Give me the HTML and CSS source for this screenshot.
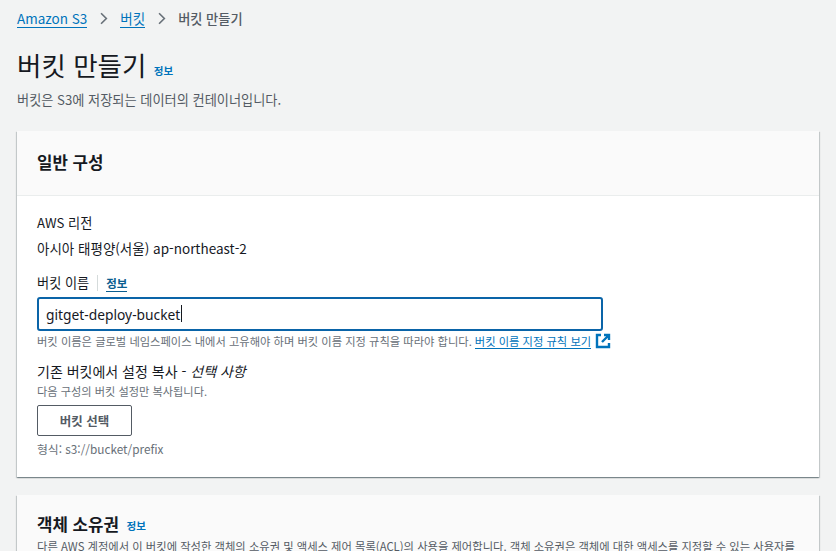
FILE: index.html
```html
<!DOCTYPE html>
<html lang="ko">
<head>
  <meta charset="UTF-8" />
  <title>버킷 만들기</title>
  <link rel="stylesheet" href="styles.css">
</head>
<body>
  <nav class="breadcrumb">
    <a href="#">Amazon S3</a>
    <svg class="chevron" viewBox="0 0 16 16"><path d="M5 1.5 11.5 8 5 14.5"/></svg>
    <a href="#">버킷</a>
    <svg class="chevron" viewBox="0 0 16 16"><path d="M5 1.5 11.5 8 5 14.5"/></svg>
    <span>버킷 만들기</span>
  </nav>

  <header class="page-header">
    <h1>버킷 만들기 <a class="info" href="#">정보</a></h1>
    <p>버킷은 S3에 저장되는 데이터의 컨테이너입니다.</p>
  </header>

  <section class="card">
    <div class="card-head">
      <h2>일반 구성</h2>
    </div>
    <div class="card-body">
      <div class="label">AWS 리전</div>
      <div class="region">아시아 태평양(서울) ap-northeast-2</div>

      <div class="label name-label">
        버킷 이름
        <span class="divider"></span>
        <a class="info-link" href="#">정보</a>
      </div>
      <div class="input-wrap">
        <input class="name-input" type="text" value="gitget-deploy-bucket" />
        <span class="caret"></span>
      </div>
      <div class="hint">
        버킷 이름은 글로벌 네임스페이스 내에서 고유해야 하며 버킷 이름 지정 규칙을 따라야 합니다.
        <a href="#">버킷 이름 지정 규칙 보기</a>
        <svg class="external" viewBox="0 0 16 16"><path d="M9 2H14V7M14 2 7 9M6 2H2V14H14V10"/></svg>
      </div>

      <div class="label copy-label">기존 버킷에서 설정 복사 - <i>선택 사항</i></div>
      <div class="small copy-note">다음 구성의 버킷 설정만 복사됩니다.</div>
      <button class="btn" type="button">버킷 선택</button>
      <div class="small format">형식: s3://bucket/prefix</div>
    </div>
  </section>

  <section class="card second">
    <div class="card-head">
      <h2>객체 소유권 <a class="info" href="#">정보</a></h2>
      <p>다른 AWS 계정에서 이 버킷에 작성한 객체의 소유권 및 액세스 제어 목록(ACL)의 사용을 제어합니다. 객체 소유권은 객체에 대한 액세스를 지정할 수 있는 사용자를</p>
    </div>
  </section>
</body>
</html>
```

FILE: styles.css
```css
html, body {
  height: 551px;
  overflow: hidden;
}
body {
  margin: 0;
  padding: 0 17px 0 17px;
  background: #f2f3f3;
  color: #16191f;
  font-family: "Noto Sans CJK KR", "Noto Sans", sans-serif;
  font-size: 14px;
}
a {
  color: #0073bb;
  text-decoration: none;
}
.breadcrumb {
  display: flex;
  align-items: center;
  gap: 10px;
  height: 36px;
  font-size: 13.5px;
  color: #545b64;
}
.breadcrumb a {
  border-bottom: 1px solid #0073bb;
  line-height: 18px;
}
.breadcrumb span {
  font-size: 13.2px;
  font-weight: 500;
}
.chevron {
  width: 13px;
  height: 13px;
  fill: none;
  stroke: #687078;
  stroke-width: 2;
}
.page-header {
  margin-top: 12px;
}
h1 {
  margin: 0;
  font-size: 26.5px;
  line-height: 33px;
  font-weight: 400;
}
.info {
  font-size: 10.5px;
  font-weight: 700;
  vertical-align: 1px;
}
h2 .info {
  margin-left: 3px;
}
.page-header p {
  margin: 4px 0 0;
  font-size: 13.2px;
  line-height: 18px;
  color: #545b64;
}
.card {
  width: 802px;
  background: #fff;
  margin-top: 22px;
  box-shadow: 0 1px 1px 0 rgba(0, 28, 36, 0.3), 1px 1px 1px 0 rgba(0, 28, 36, 0.15), -1px 1px 1px 0 rgba(0, 28, 36, 0.15);
}
.card-head {
  background: #fafafa;
  border-bottom: 1px solid #eaeded;
  padding: 17px 20px 19px;
  height: 28px;
}
h2 {
  margin: 0;
  font-size: 16.8px;
  line-height: 28px;
  font-weight: 700;
}
.card-body {
  padding: 18px 20px 20px;
}
.label {
  font-size: 13.2px;
  line-height: 18px;
}
.region {
  font-size: 13.5px;
  line-height: 18px;
  margin-top: 7px;
}
.name-label {
  display: flex;
  align-items: center;
  margin-top: 16px;
  line-height: 20px;
}
.divider {
  width: 1px;
  height: 16px;
  background: #d5dbdb;
  margin: 0 8px;
}
.info-link {
  font-size: 11.5px;
  font-weight: 700;
  color: #0b5e90;
  border-bottom: 1px solid #0b5e90;
  line-height: 16px;
}
.input-wrap {
  position: relative;
  margin-top: 4px;
}
.name-input {
  display: block;
  box-sizing: border-box;
  width: 566px;
  height: 34px;
  padding: 0 7px;
  border: 2px solid #0a64a8;
  border-radius: 3px;
  outline: none;
  color: #16191f;
  font-family: "Noto Sans", sans-serif;
  font-size: 13.8px;
}
.caret {
  position: absolute;
  left: 144px;
  top: 8px;
  width: 1px;
  height: 17px;
  background: #16191f;
}
.hint {
  display: flex;
  align-items: center;
  gap: 3px;
  margin-top: 2px;
  font-size: 11.27px;
  line-height: 16px;
  color: #687078;
}
.hint a {
  border-bottom: 1px solid #0073bb;
  line-height: 14px;
}
.external {
  width: 16px;
  height: 16px;
  margin-left: 1px;
  fill: none;
  stroke: #0073bb;
  stroke-width: 2.4;
}
.copy-label {
  margin-top: 13px;
  font-size: 14px;
}
.copy-note {
  margin-top: 3px;
}
.small {
  font-size: 11.2px;
  line-height: 16px;
  color: #687078;
}
.btn {
  display: block;
  width: 95px;
  height: 31px;
  margin-top: 6px;
  padding: 0;
  background: #fff;
  border: 1px solid #545b64;
  border-radius: 2px;
  color: #545b64;
  font-family: inherit;
  font-size: 12.5px;
  font-weight: 700;
}
.format {
  margin-top: 5px;
  font-size: 11.8px;
}
.second {
  margin-top: 18px;
}
.second .card-head {
  height: auto;
  border-bottom: 0;
  padding-top: 15px;
}
.second p {
  margin: -2px 0 0;
  font-size: 11.3px;
  line-height: 16px;
  white-space: nowrap;
  color: #545b64;
}
```
